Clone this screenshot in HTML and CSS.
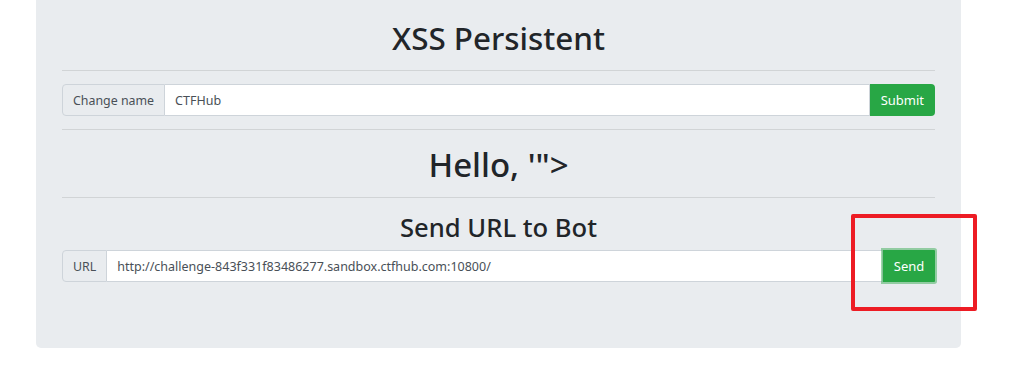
FILE: index.html
```html
<!DOCTYPE html>
<html lang="en">
<head>
<meta charset="utf-8">
<title>XSS Persistent</title>
<link rel="stylesheet" href="styles.css">
</head>
<body>
<div class="jumbotron">
  <h1 class="title">XSS Persistent</h1>
  <hr class="rule">
  <form class="input-group">
    <span class="addon">Change name</span>
    <input class="field" type="text" value="CTFHub">
    <button class="btn" type="button">Submit</button>
  </form>
  <hr class="rule rule-after">
  <h2 class="hello">Hello, '"&gt;</h2>
  <hr class="rule rule-tight">
  <h3 class="subtitle">Send URL to Bot</h3>
  <form class="input-group">
    <span class="addon">URL</span>
    <input class="field" type="text" value="http://challenge-843f331f83486277.sandbox.ctfhub.com:10800/">
    <button class="btn btn-focus" type="button">Send</button>
  </form>
</div>
<div class="annotation"></div>
</body>
</html>
```
FILE: styles.css
```css
html, body {
  margin: 0;
  padding: 0;
  background: #ffffff;
  font-family: "Noto Sans", "Open Sans", sans-serif;
  color: #212529;
}

.jumbotron {
  width: 925px;
  margin-left: 36px;
  box-sizing: border-box;
  padding: 18px 26px 66px 26px;
  background: #e9ecef;
  border-radius: 0 0 5px 5px;
}

.title {
  margin: 0;
  font-size: 31.4px;
  line-height: 40px;
  font-weight: 500;
  text-align: center;
}

.rule {
  margin: 12px 0 13px 0;
  border: 0;
  border-top: 1px solid rgba(0, 0, 0, 0.1);
  height: 0;
}

.rule-after {
  margin-top: 13px;
  margin-bottom: 0;
}

.hello {
  margin: 13px 0 0 0;
  font-size: 33px;
  line-height: 44px;
  font-weight: 500;
  text-align: center;
}

.rule-tight {
  margin: 10px 0 12px 0;
}

.subtitle {
  margin: 0 0 4px 0;
  font-size: 25.6px;
  line-height: 36px;
  font-weight: 500;
  text-align: center;
}

.input-group {
  display: flex;
  height: 32px;
  margin: 0;
}

.addon {
  display: flex;
  align-items: center;
  padding: 0 10px;
  border: 1px solid #ced4da;
  border-radius: 4px 0 0 4px;
  background: #e9ecef;
  color: #495057;
  font-size: 12.4px;
}

.field {
  flex: 1;
  min-width: 0;
  margin: 0;
  padding: 0 10px;
  border: 1px solid #ced4da;
  border-left: 0;
  background: #ffffff;
  color: #495057;
  font-family: "Noto Sans", "Open Sans", sans-serif;
  font-size: 12.5px;
  outline: none;
}

.btn {
  margin: 0;
  padding: 0 11px;
  border: 0;
  border-radius: 0 4px 4px 0;
  background: #28a745;
  color: #ffffff;
  font-family: "Noto Sans", "Open Sans", sans-serif;
  font-size: 13px;
}

.btn-focus {
  position: relative;
  width: 52px;
  padding: 0;
  border-radius: 0 1px 1px 0;
  box-shadow: 0 0 0 2px rgba(40, 167, 69, 0.45);
}

.annotation {
  position: absolute;
  left: 851px;
  top: 214px;
  width: 126px;
  height: 97px;
  box-sizing: border-box;
  border: 4px solid #ed1c24;
  border-radius: 2px;
}
```
